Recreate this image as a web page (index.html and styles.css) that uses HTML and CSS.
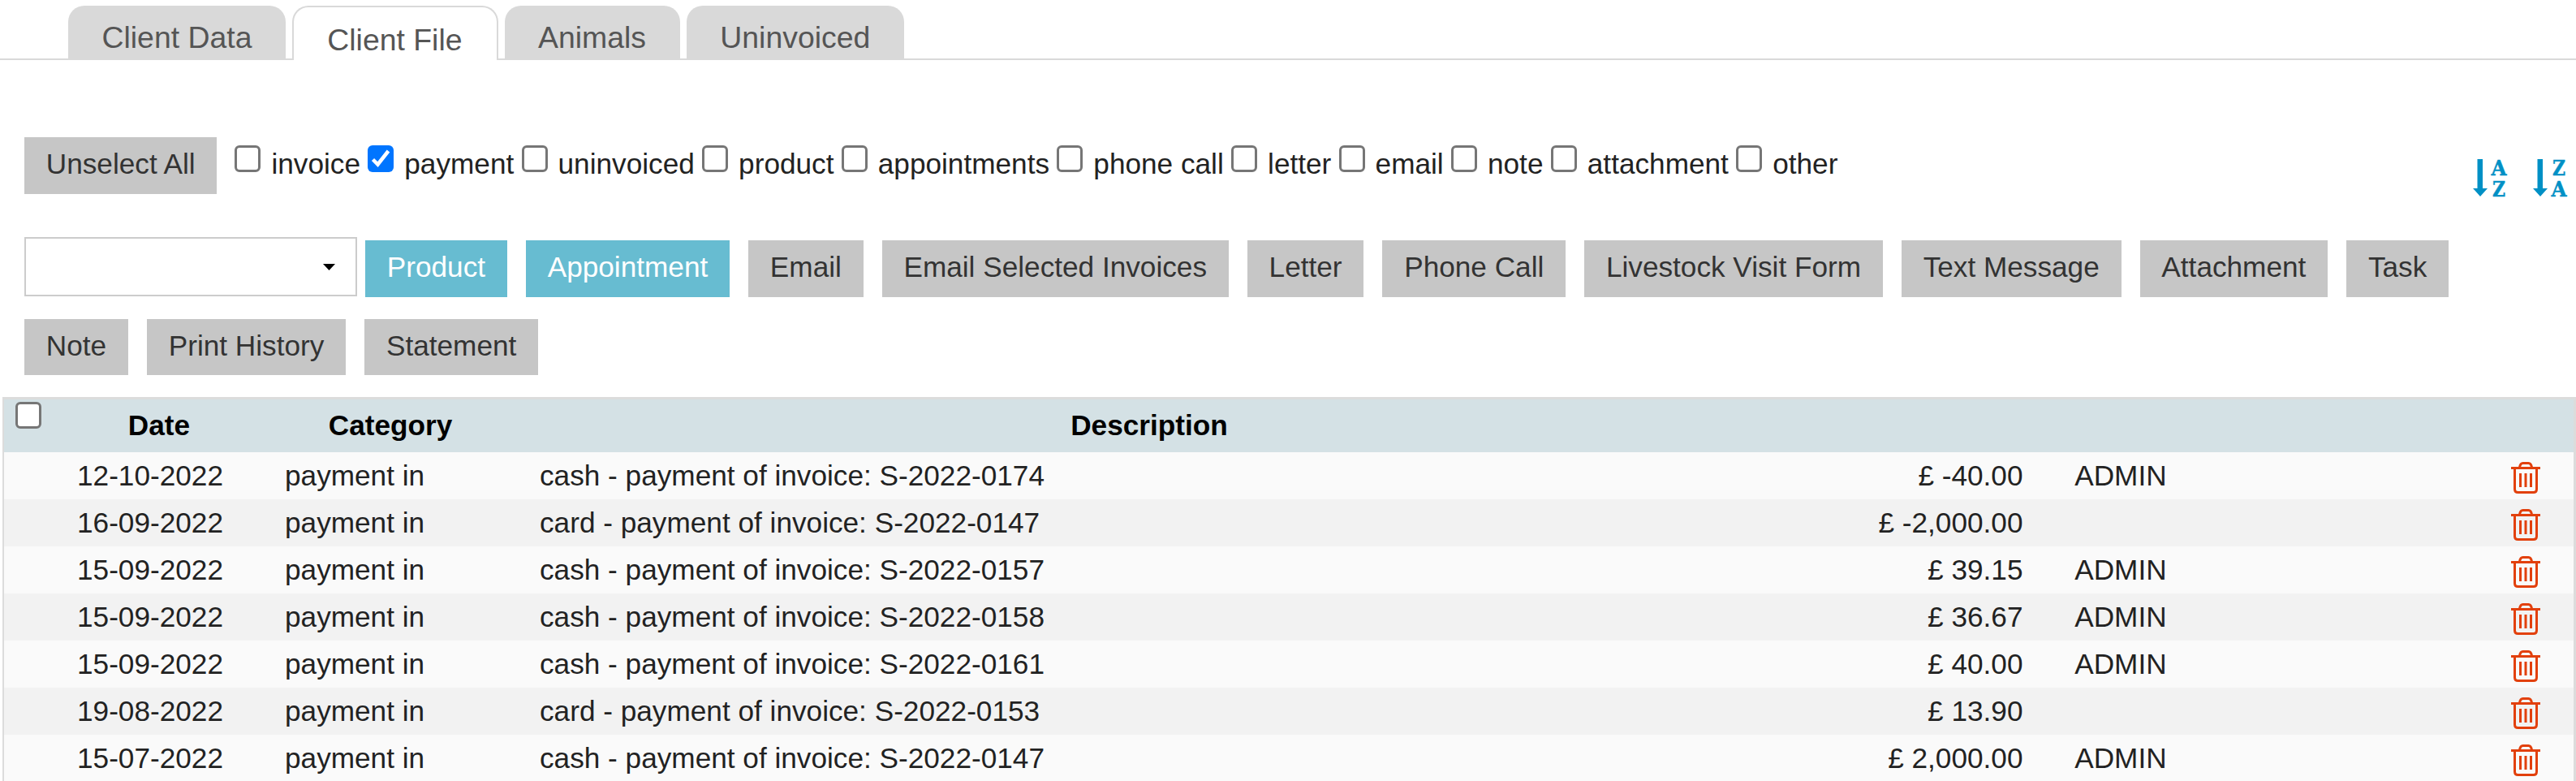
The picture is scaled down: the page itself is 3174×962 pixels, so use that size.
FILE: index.html
```
<!DOCTYPE html>
<html lang="en">
<head>
<meta charset="utf-8">
<title>Client File</title>
<link rel="stylesheet" href="styles.css">
</head>
<body>
<svg class="defs" width="0" height="0">
  <symbol id="trash" viewBox="0 0 36 39">
    <g fill="none" stroke="#e2400c" stroke-width="3">
      <path d="M0 7.5H36"/>
      <path d="M10.5 7.5V6.5Q11.500 1.500 14.500 1.500H21.500Q24.500 1.500 25.500 6.500V7.500"/>
      <path d="M4.500 7.500V33.500Q4.500 37.500 8.500 37.500H27.500Q31.500 37.500 31.500 33.500V7.500"/>
      <path d="M11.500 14V31M18 14V31M24.500 14V31"/>
    </g>
  </symbol>
</svg>
<nav class="tabs">
  <a class="tab">Client Data</a>
  <a class="tab active">Client File</a>
  <a class="tab">Animals</a>
  <a class="tab">Uninvoiced</a>
</nav>
<section class="filters">
  <button class="btn">Unselect All</button>
  <div class="checks">
    <label><i class="box"></i>invoice</label>
    <label><i class="box on"><svg viewBox="0 0 32 32"><path d="M6.500 17.500L12.500 23.500L25.500 7"/></svg></i>payment</label>
    <label><i class="box"></i>uninvoiced</label>
    <label><i class="box"></i>product</label>
    <label><i class="box"></i>appointments</label>
    <label><i class="box"></i>phone call</label>
    <label><i class="box"></i>letter</label>
    <label><i class="box"></i>email</label>
    <label><i class="box"></i>note</label>
    <label><i class="box"></i>attachment</label>
    <label><i class="box"></i>other</label>
  </div>
  <div class="sort">
    <svg width="52" height="66" viewBox="0 -10 52 66"><path d="M5.500 0H12V36H18L9 46L0 36H5.500Z"/><text x="22.500" y="19.500" textLength="19" lengthAdjust="spacingAndGlyphs">A</text><text x="24" y="45.500" textLength="16" lengthAdjust="spacingAndGlyphs">Z</text></svg>
    <svg width="52" height="66" viewBox="0 -10 52 66"><path d="M5.500 0H12V36H18L9 46L0 36H5.500Z"/><text x="24" y="19.500" textLength="16" lengthAdjust="spacingAndGlyphs">Z</text><text x="22.500" y="45.500" textLength="19" lengthAdjust="spacingAndGlyphs">A</text></svg>
  </div>
</section>
<section class="actions">
  <div class="row">
    <div class="select"><svg width="15" height="8" viewBox="0 0 15 8"><path d="M0 0H15L7.500 8Z"/></svg></div>
    <button class="btn primary">Product</button>
    <button class="btn primary">Appointment</button>
    <button class="btn">Email</button>
    <button class="btn">Email Selected Invoices</button>
    <button class="btn">Letter</button>
    <button class="btn">Phone Call</button>
    <button class="btn">Livestock Visit Form</button>
    <button class="btn">Text Message</button>
    <button class="btn">Attachment</button>
    <button class="btn">Task</button>
  </div>
  <div class="row second">
    <button class="btn">Note</button>
    <button class="btn">Print History</button>
    <button class="btn">Statement</button>
  </div>
</section>
<table class="history">
  <colgroup><col class="c-check"><col class="c-date"><col class="c-cat"><col class="c-desc"><col class="c-amount"><col class="c-user"><col class="c-del"></colgroup>
  <thead>
    <tr><th class="pick"><i class="box"></i></th><th>Date</th><th>Category</th><th>Description</th><th></th><th></th><th></th></tr>
  </thead>
  <tbody>
    <tr><td></td><td class="date">12-10-2022</td><td class="cat">payment in</td><td class="desc">cash - payment of invoice: S-2022-0174</td><td class="amount">£ -40.00</td><td class="user">ADMIN</td><td class="del"><svg><use href="#trash"/></svg></td></tr>
    <tr><td></td><td class="date">16-09-2022</td><td class="cat">payment in</td><td class="desc">card - payment of invoice: S-2022-0147</td><td class="amount">£ -2,000.00</td><td class="user"></td><td class="del"><svg><use href="#trash"/></svg></td></tr>
    <tr><td></td><td class="date">15-09-2022</td><td class="cat">payment in</td><td class="desc">cash - payment of invoice: S-2022-0157</td><td class="amount">£ 39.15</td><td class="user">ADMIN</td><td class="del"><svg><use href="#trash"/></svg></td></tr>
    <tr><td></td><td class="date">15-09-2022</td><td class="cat">payment in</td><td class="desc">cash - payment of invoice: S-2022-0158</td><td class="amount">£ 36.67</td><td class="user">ADMIN</td><td class="del"><svg><use href="#trash"/></svg></td></tr>
    <tr><td></td><td class="date">15-09-2022</td><td class="cat">payment in</td><td class="desc">cash - payment of invoice: S-2022-0161</td><td class="amount">£ 40.00</td><td class="user">ADMIN</td><td class="del"><svg><use href="#trash"/></svg></td></tr>
    <tr><td></td><td class="date">19-08-2022</td><td class="cat">payment in</td><td class="desc">card - payment of invoice: S-2022-0153</td><td class="amount">£ 13.90</td><td class="user"></td><td class="del"><svg><use href="#trash"/></svg></td></tr>
    <tr><td></td><td class="date">15-07-2022</td><td class="cat">payment in</td><td class="desc">cash - payment of invoice: S-2022-0147</td><td class="amount">£ 2,000.00</td><td class="user">ADMIN</td><td class="del"><svg><use href="#trash"/></svg></td></tr>
  </tbody>
</table>
</body>
</html>
```
FILE: styles.css
```
* { box-sizing: border-box; }
html { overflow: hidden; }
body {
  margin: 0;
  height: 962px;
  overflow: hidden;
  background: #fff;
  color: #222;
  font: 35.2px/58px "Liberation Sans", Arial, sans-serif;
}
.defs { display: block; }

.tabs {
  display: flex;
  gap: 8px;
  height: 74px;
  padding: 7px 0 0 84px;
  border-bottom: 2px solid #d9d9d9;
}
.tab {
  height: 67px;
  padding: 14px 41.800px 0 41.500px;
  border-radius: 20px 20px 0 0;
  background: #d9d9d9;
  color: #555;
  font-size: 37.400px;
  line-height: 50px;
  white-space: nowrap;
}
.tab.active {
  padding: 15px 42px 0 41px;
  border: 2px solid #d9d9d9;
  border-bottom: 0;
  background: #fff;
}

.btn {
  flex: none;
  height: 70px;
  margin: 0;
  padding: 0 26.800px 4px;
  border: 0;
  background: #c6c6c6;
  color: #333;
  font: inherit;
  line-height: 66px;
  white-space: nowrap;
}
.btn.primary { background: #67bcd1; color: #fff; }

.filters {
  display: flex;
  align-items: flex-start;
  height: 165px;
  padding: 95px 1px 0 30px;
}
.checks {
  display: flex;
  gap: 9.300px;
  margin-left: 22px;
  line-height: 66px;
}
.checks label {
  display: flex;
  gap: 13px;
  white-space: nowrap;
}
.checks .box { margin-top: 10px; }
.box {
  display: block;
  flex: none;
  width: 32px;
  height: 33px;
  border: 3px solid #767676;
  border-radius: 6px;
  background: #fff;
}
.box.on { border: 0; background: #0075ff; }
.box svg { display: block; width: 32px; height: 32px; }
.box path { fill: none; stroke: #fff; stroke-width: 4.500; }

.sort {
  display: flex;
  gap: 22px;
  margin: 17px 0 0 auto;
}
.sort svg { display: block; overflow: visible; fill: #0090c5; }
.sort text {
  font: bold 26.700px "DejaVu Serif", serif;
  stroke: #0090c5;
  stroke-width: 0.500;
}

.actions { padding: 53px 0 0 30px; }
.row { display: flex; gap: 23px; }
.row .btn { margin-top: 4px; }
.row.second { margin-top: 27px; }
.row.second .btn { height: 69px; margin-top: 0; padding-bottom: 3px; }
.select {
  display: flex;
  align-items: center;
  justify-content: flex-end;
  width: 410px;
  height: 73px;
  margin-right: -13px;
  padding-right: 25px;
  border: 2px solid #ccc;
}

.history {
  width: 3171px;
  margin: 27px 0 0 3px;
  border: solid #dcdcdc;
  border-width: 3px 3px 0 2px;
  border-spacing: 0;
  table-layout: fixed;
}
.c-check { width: 83px; }
.c-date { width: 216px; }
.c-cat { width: 354px; }
.c-desc { width: 1516px; }
.c-amount { width: 323px; }
.c-user { width: 320px; }
.history th, .history td { padding: 0; white-space: nowrap; }
.history th {
  height: 65px;
  background: #d4e1e5;
  color: #000;
  line-height: 63px;
  padding-bottom: 2px;
}
.history .pick { padding: 3px 0 0 14px; vertical-align: top; }
.history td { height: 58px; background: #fafafa; }
.history tr:nth-child(even) td { background: #f2f2f2; }
.history .date { padding-left: 7px; }
.history .cat { padding-left: 47px; }
.history .desc { padding-left: 7px; }
.history .amount { padding-right: 4.500px; text-align: right; }
.history .user { padding-left: 59.200px; }
.del svg { display: block; width: 36px; height: 39px; margin: 5px 0 0 277px; }
```
